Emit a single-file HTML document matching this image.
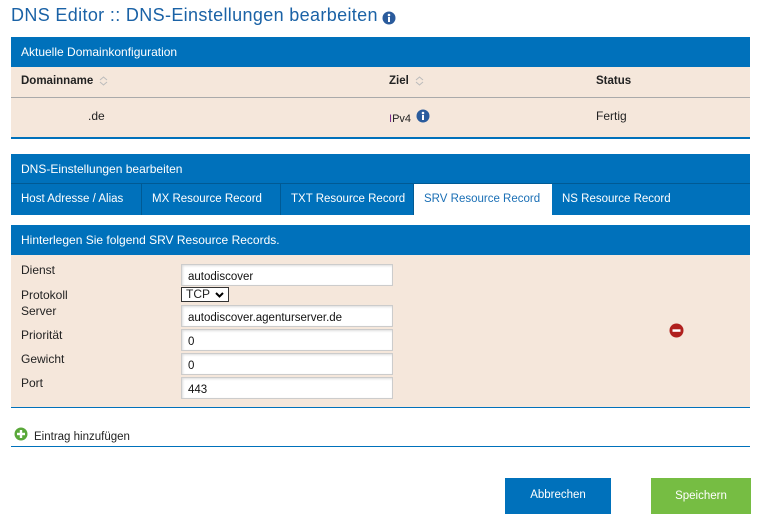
<!DOCTYPE html>
<html><head><meta charset="utf-8"><style>
*{margin:0;padding:0;box-sizing:border-box}
body{width:761px;height:525px;background:#fff;font-family:"Liberation Sans",sans-serif;font-size:12px;color:#222;position:relative;overflow:hidden}
.a{position:absolute;white-space:nowrap}
.blue{background:#0071bb;color:#fff}
.beige{background:#f5e7db}
.inp{position:absolute;left:181px;width:212px;height:22px;background:#fff;border:1px solid #ccc;box-shadow:inset 1px 1px 2px #ddd;padding:6px 0 0 6px;font-size:11.5px;color:#111}
.sort{display:inline-block;vertical-align:middle;margin-left:6px;width:9px;height:10px}
.tab{position:absolute;top:184px;height:31px;line-height:31px;color:#fff;padding-left:10px;font-size:11.5px;border-right:1px solid #005a94}
</style></head><body>
<div class="a" style="left:11px;top:5px;font-size:18px;color:#1a62a6;letter-spacing:0.35px">DNS Editor :: DNS-Einstellungen bearbeiten</div>
<svg class="a" style="left:382px;top:11px" width="14" height="14" viewBox="0 0 14 14"><circle cx="7" cy="7" r="6.5" fill="#2a5b9c"/><circle cx="7" cy="4" r="1.3" fill="#fff"/><rect x="6" y="6" width="2" height="5" fill="#fff"/></svg>

<div class="a blue" style="left:11px;top:37px;width:739px;height:30px;line-height:30px;padding-left:10px">Aktuelle Domainkonfiguration</div>
<div class="a beige" style="left:11px;top:67px;width:739px;height:70px"></div>
<div class="a" style="left:11px;top:97px;width:739px;height:1px;background:#aaa"></div>
<div class="a" style="left:11px;top:137px;width:739px;height:2px;background:#0071bb"></div>
<div class="a" style="left:21px;top:75px;font-weight:bold;font-size:11.5px">Domainname<svg class="sort" viewBox="0 0 9 10"><path d="M1 4 L4.5 1 L8 4 M1 6 L4.5 9 L8 6" fill="none" stroke="#bbb"/></svg></div>
<div class="a" style="left:389px;top:75px;font-weight:bold;font-size:11.5px">Ziel<svg class="sort" viewBox="0 0 9 10"><path d="M1 4 L4.5 1 L8 4 M1 6 L4.5 9 L8 6" fill="none" stroke="#bbb"/></svg></div>
<div class="a" style="left:596px;top:75px;font-weight:bold;font-size:11.5px">Status</div>
<div class="a" style="left:88px;top:109px">.de</div>
<div class="a" style="left:389px;top:113px;font-size:11px"><span style="color:#7a2a8a">I</span>Pv4</div>
<svg class="a" style="left:416px;top:109px" width="14" height="14" viewBox="0 0 14 14"><circle cx="7" cy="7" r="6.5" fill="#2a5b9c"/><circle cx="7" cy="4" r="1.3" fill="#fff"/><rect x="6" y="6" width="2" height="5" fill="#fff"/></svg>
<div class="a" style="left:596px;top:109px">Fertig</div>

<div class="a blue" style="left:11px;top:154px;width:739px;height:30px;line-height:30px;padding-left:10px;border-bottom:1px solid #005a94">DNS-Einstellungen bearbeiten</div>
<div class="a blue" style="left:11px;top:184px;width:739px;height:31px"></div>
<div class="tab" style="left:11px;width:131px">Host Adresse / Alias</div>
<div class="tab" style="left:142px;width:139px">MX Resource Record</div>
<div class="tab" style="left:281px;width:133px">TXT Resource Record</div>
<div class="tab" style="left:414px;width:138px;background:#fff;color:#1a6fb5;border:none">SRV Resource Record</div>
<div class="tab" style="left:552px;width:150px;border:none">NS Resource Record</div>

<div class="a blue" style="left:11px;top:225px;width:739px;height:30px;line-height:30px;padding-left:10px">Hinterlegen Sie folgend SRV Resource Records.</div>
<div class="a beige" style="left:11px;top:255px;width:739px;height:153px"></div>
<div class="a" style="left:11px;top:407px;width:739px;height:1px;background:#0071bb"></div>
<div class="a" style="left:21px;top:263px">Dienst</div>
<div class="a" style="left:21px;top:288px">Protokoll</div>
<div class="a" style="left:21px;top:304px">Server</div>
<div class="a" style="left:21px;top:328px">Priorität</div>
<div class="a" style="left:21px;top:352px">Gewicht</div>
<div class="a" style="left:21px;top:376px">Port</div>
<div class="inp" style="top:264px">autodiscover</div>
<div class="a" style="left:181px;top:287px;width:48px;height:15px;background:#fff;border:1px solid #333;font-size:12px;padding-left:4px;line-height:13px">TCP<svg style="position:absolute;left:33px;top:4px" width="9" height="6" viewBox="0 0 9 6"><path d="M1 1 L4.5 4.5 L8 1" fill="none" stroke="#000" stroke-width="2"/></svg></div>
<div class="inp" style="top:305px">autodiscover.agenturserver.de</div>
<div class="inp" style="top:329px">0</div>
<div class="inp" style="top:353px">0</div>
<div class="inp" style="top:377px">443</div>
<svg class="a" style="left:669px;top:323px" width="15" height="15" viewBox="0 0 15 15"><circle cx="7.5" cy="7.5" r="7" fill="#b0201e"/><rect x="3.5" y="6.3" width="8" height="2.5" fill="#fff"/></svg>

<svg class="a" style="left:14px;top:427px" width="14" height="14" viewBox="0 0 14 14"><circle cx="7" cy="7" r="6.5" fill="#5aa83a"/><rect x="3" y="5.8" width="8" height="2.4" fill="#fff"/><rect x="5.8" y="3" width="2.4" height="8" fill="#fff"/></svg>
<div class="a" style="left:34px;top:431px;font-size:11.5px">Eintrag hinzufügen</div>
<div class="a" style="left:11px;top:446px;width:739px;height:1px;background:#0071bb"></div>

<div class="a" style="left:505px;top:478px;width:106px;height:36px;background:#0071bb;color:#fff;text-align:center;line-height:34px;font-size:11.5px">Abbrechen</div>
<div class="a" style="left:651px;top:478px;width:100px;height:36px;background:#76bd43;color:#fff;text-align:center;line-height:36px;font-size:11.5px">Speichern</div>
</body></html>
